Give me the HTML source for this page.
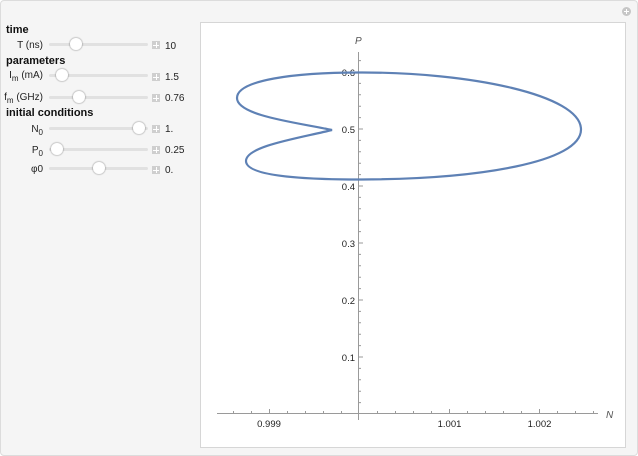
<!DOCTYPE html>
<html><head><meta charset="utf-8"><style>
html,body{margin:0;padding:0;background:#fff;}
body{width:638px;height:456px;position:relative;overflow:hidden;font-family:"Liberation Sans",sans-serif;}
.panel{position:absolute;left:0;top:0;width:636px;height:454px;background:#f5f5f5;border:1px solid #dcdcdc;border-radius:4px;}
.plot{position:absolute;left:200px;top:22px;width:424px;height:424px;background:#fff;border:1px solid #d6d6d6;}
.h{position:absolute;left:6px;font-size:11px;font-weight:bold;color:#111;}
.lab{position:absolute;font-size:10px;color:#222;text-align:right;width:40px;left:3px;}
.lab sub{font-size:8px;vertical-align:-3px;}
.track{position:absolute;left:49px;width:99px;height:3px;background:#e1e1e1;border-radius:2px;}
.thumb{position:absolute;width:12px;height:12px;border-radius:50%;background:#fff;box-shadow:0 0 1px 1px rgba(0,0,0,0.18);}
.plus{position:absolute;left:152px;width:8px;height:8px;background:#cfcfcf;}
.plus:before{content:"";position:absolute;left:1px;top:3.5px;width:6px;height:1px;background:#fff;}
.plus:after{content:"";position:absolute;left:3.5px;top:1px;width:1px;height:6px;background:#fff;}
.val{position:absolute;left:165px;font-size:10px;color:#222;}
.gear{position:absolute;left:622px;top:7px;width:9px;height:9px;border-radius:50%;background:#c6c6c6;}
.gear:before{content:"";position:absolute;left:2px;top:4px;width:5px;height:1px;background:#fff;}
.gear:after{content:"";position:absolute;left:4px;top:2px;width:1px;height:5px;background:#fff;}
</style></head><body>
<div class="panel"></div>
<div class="gear"></div>
<div class="plot"></div>

<div class="h" style="top:24px">time</div>
<div class="lab" style="top:40px">T (ns)</div>
<div class="track" style="top:43px"></div><div class="thumb" style="left:70px;top:38px"></div>
<div class="plus" style="top:41px"></div><div class="val" style="top:41px">10</div>

<div class="h" style="top:55px">parameters</div>
<div class="lab" style="top:70px">I<sub>m</sub> (mA)</div>
<div class="track" style="top:74px"></div><div class="thumb" style="left:56px;top:69px"></div>
<div class="plus" style="top:73px"></div><div class="val" style="top:72px">1.5</div>

<div class="lab" style="top:92px">f<sub>m</sub> (GHz)</div>
<div class="track" style="top:96px"></div><div class="thumb" style="left:73px;top:91px"></div>
<div class="plus" style="top:94px"></div><div class="val" style="top:93px">0.76</div>

<div class="h" style="top:107px">initial conditions</div>
<div class="lab" style="top:124px">N<sub>0</sub></div>
<div class="track" style="top:127px"></div><div class="thumb" style="left:133px;top:122px"></div>
<div class="plus" style="top:125px"></div><div class="val" style="top:124px">1.</div>

<div class="lab" style="top:145px">P<sub>0</sub></div>
<div class="track" style="top:148px"></div><div class="thumb" style="left:51px;top:143px"></div>
<div class="plus" style="top:146px"></div><div class="val" style="top:145px">0.25</div>

<div class="lab" style="top:164px">φ0</div>
<div class="track" style="top:167px"></div><div class="thumb" style="left:93px;top:162px"></div>
<div class="plus" style="top:166px"></div><div class="val" style="top:165px">0.</div>

<svg width="638" height="456" style="position:absolute;left:0;top:0" xmlns="http://www.w3.org/2000/svg">
<g stroke="#9a9a9a" stroke-width="1" fill="none">
<path d="M358.5,52 V420 M217,413.5 H598"/>
<path d="M358,402.6h3M358,391.2h3M358,379.8h3M358,368.4h3M358,345.6h3M358,334.2h3M358,322.8h3M358,311.4h3M358,288.6h3M358,277.2h3M358,265.8h3M358,254.4h3M358,231.6h3M358,220.2h3M358,208.8h3M358,197.4h3M358,174.6h3M358,163.2h3M358,151.8h3M358,140.4h3M358,117.6h3M358,106.2h3M358,94.8h3M358,83.4h3M358,60.6h3"/>
<path d="M358,357h5M358,300h5M358,243h5M358,186h5M358,129h5M358,72h5"/>
<path d="M233.5,413v-2M251.5,413v-2M287.5,413v-2M305.5,413v-2M323.5,413v-2M341.5,413v-2M377.5,413v-2M395.5,413v-2M413.5,413v-2M431.5,413v-2M467.5,413v-2M485.5,413v-2M503.5,413v-2M521.5,413v-2M557.5,413v-2M575.5,413v-2M593.5,413v-2"/>
<path d="M269.5,413v-4M449.5,413v-4M539.5,413v-4"/>
</g>
<g font-family="Liberation Sans,sans-serif" font-size="9.5" fill="#222" text-anchor="end">
<text x="355" y="76">0.6</text><text x="355" y="133">0.5</text><text x="355" y="190">0.4</text>
<text x="355" y="247">0.3</text><text x="355" y="304">0.2</text><text x="355" y="361">0.1</text>
</g>
<g font-family="Liberation Sans,sans-serif" font-size="9.5" fill="#222" text-anchor="middle">
<text x="269" y="427">0.999</text><text x="449.5" y="427">1.001</text><text x="539.5" y="427">1.002</text>
</g>
<g font-family="Liberation Sans,sans-serif" font-size="10" fill="#555" font-style="italic">
<text x="355" y="44">P</text><text x="606" y="418">N</text>
</g>
<path d="M359,72.5 C470,72 581,95 581,129.5 C581,162 480,179 362,179.5 C295,179.5 246,175 246,161 C246,146 300,138 332,130 C300,123 237,116 237,98 C237,80 295,72.5 359,72.5 Z" fill="none" stroke="#5e81b5" stroke-width="2.2"/>
</svg>
</body></html>
